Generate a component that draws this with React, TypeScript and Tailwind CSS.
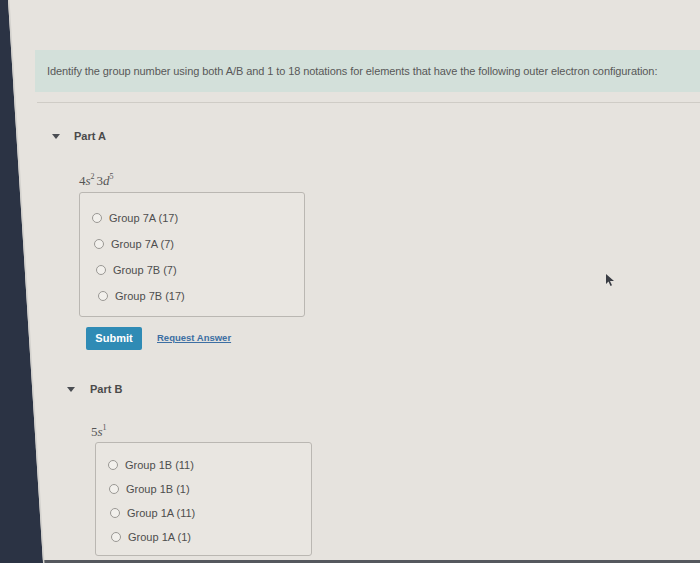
import React from 'react';

const font = { fontFamily: '"Liberation Sans", Arial, sans-serif' };

function Caret() {
  return (
    <svg width="8" height="5" viewBox="0 0 8 5" className="shrink-0">
      <path d="M0 0 L8 0 L4 5 Z" fill="#4a4d52" />
    </svg>
  );
}

function Radio() {
  return <span className="w-[10px] h-[10px] rounded-full border border-[#9a9894] bg-[#f2f0ec] shrink-0" />;
}

function Option({ label, indent }: { label: string; indent: string }) {
  return (
    <div className={`flex items-center h-4 gap-[7px] ${indent}`}>
      <Radio />
      <span className="text-[11px] text-[#4e4e4e]">{label}</span>
    </div>
  );
}

export default function App() {
  return (
    <div className="relative w-[700px] h-[563px] overflow-hidden flex flex-col bg-[#e6e3de]" style={font}>
      <div className="flex-1 flex flex-col">
        <div className="mt-[50px] ml-[35px] h-[42px] bg-[#d3e0da] flex items-center pl-[12px]">
          <span className="text-[11px] text-[#585858] tracking-[-0.08px]">
            Identify the group number using both A/B and 1 to 18 notations for elements that have the following outer electron configuration:
          </span>
        </div>
        <div className="mt-[10px] ml-[37px] border-t border-[#cfccc6]" />

        {/* Part A */}
        <div className="mt-[25px] ml-[52px] h-4 flex items-center gap-[14px]">
          <Caret />
          <span className="text-[11px] font-semibold text-[#4a4a4a]">Part A</span>
        </div>
        <div className="mt-[29px] ml-[79px] h-4 flex items-center text-[13px] text-[#555]" style={{ fontFamily: '"Liberation Serif", serif' }}>
          <span>4</span><span className="italic">s</span><sup className="text-[8px]">2</sup>
          <span className="ml-[2px]">3</span><span className="italic">d</span><sup className="text-[8px]">5</sup>
        </div>
        <div className="mt-[3px] ml-[79px] w-[226px] h-[125px] border border-[#bab7b2] rounded-[3px] bg-[#e9e6e1] flex flex-col gap-[10px] pt-[17px] pl-[12px]">
          <Option label="Group 7A (17)" indent="ml-0" />
          <Option label="Group 7A (7)" indent="ml-[2px]" />
          <Option label="Group 7B (7)" indent="ml-[4px]" />
          <Option label="Group 7B (17)" indent="ml-[6px]" />
        </div>
        <div className="mt-[10px] ml-[86px] flex items-center gap-[15px]">
          <button className="w-[56px] h-[23px] bg-[#2f8bb5] rounded-[2px] text-white text-[11px] font-bold">Submit</button>
          <span className="text-[9.5px] font-bold text-[#3d6fa3] underline">Request Answer</span>
        </div>

        {/* Part B */}
        <div className="mt-[31px] ml-[67px] h-4 flex items-center gap-[15px]">
          <Caret />
          <span className="text-[11px] font-semibold text-[#4a4a4a]">Part B</span>
        </div>
        <div className="mt-[27px] ml-[91px] h-4 flex items-center text-[13px] text-[#555]" style={{ fontFamily: '"Liberation Serif", serif' }}>
          <span>5</span><span className="italic">s</span><sup className="text-[8px]">1</sup>
        </div>
        <div className="mt-[2px] ml-[95px] w-[217px] h-[114px] border border-[#bab7b2] rounded-[3px] bg-[#e9e6e1] flex flex-col gap-[8px] pt-[14px] pl-[12px]">
          <Option label="Group 1B (11)" indent="ml-0" />
          <Option label="Group 1B (1)" indent="ml-[1px]" />
          <Option label="Group 1A (11)" indent="ml-[2px]" />
          <Option label="Group 1A (1)" indent="ml-[3px]" />
        </div>
      </div>
      <div className="h-[3px] bg-[#55585e]" />

      {/* photo edge of the monitor bezel */}
      <svg className="absolute left-0 top-0" width="50" height="563" viewBox="0 0 50 563">
        <polygon points="0,0 8,0 43,563 0,563" fill="#2b3344" />
        <polygon points="8,0 9.5,0 44.5,563 43,563" fill="#d4d2ce" />
      </svg>

      {/* mouse cursor */}
      <svg className="absolute left-[606px] top-[274px]" width="9" height="13" viewBox="0 0 9 13">
        <path d="M0 0 L0 10 L2.5 7.5 L4.5 12 L6 11.3 L4 7 L8 7 Z" fill="#3a3d44" />
      </svg>
    </div>
  );
}
